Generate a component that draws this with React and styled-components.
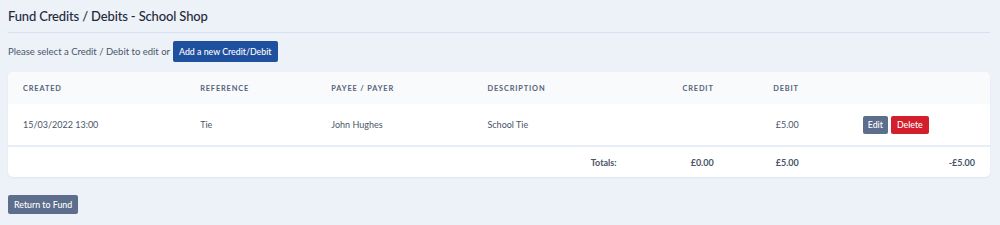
import React from "react";
import styled, { createGlobalStyle } from "styled-components";

const Global = createGlobalStyle`
  html, body { margin: 0; padding: 0; background: #edf1f8; }
  body { font-family: Lato, "Noto Sans", Arial, sans-serif; }
`;

const Page = styled.div`
  padding: 0 10px 0 8px;
  color: #4a5568;
`;

const TitleBar = styled.div`
  height: 32px;
  display: flex;
  align-items: center;
  border-bottom: 1px solid #d6e1f1;
`;

const Title = styled.h1`
  margin: 0;
  font-size: 13px;
  font-weight: 500;
  color: #1f2a3a;
  letter-spacing: -0.15px;
`;

const Prompt = styled.div`
  display: flex;
  align-items: center;
  gap: 3px;
  margin-top: 8px;
  font-size: 9.5px;
  color: #4a5568;
`;

const Button = styled.button`
  font-family: inherit;
  border: none;
  border-radius: 2px;
  color: #fff;
  font-size: ${(p) => p.$fs || 8.8}px;
  font-weight: 500;
  height: ${(p) => p.$h || 19}px;
  padding: 0 ${(p) => p.$px || 6}px;
  background: ${(p) =>
    p.$variant === "primary" ? "#1f4f9f" : p.$variant === "danger" ? "#d31f2b" : "#5d6d8c"};
  cursor: pointer;
`;

const Card = styled.div`
  margin-top: 10px;
  background: #fff;
  border-radius: 5px;
  overflow: hidden;
  box-shadow: 0 1px 2px rgba(30, 50, 90, 0.06);
`;

const Table = styled.table`
  width: 100%;
  border-collapse: collapse;
  table-layout: fixed;
`;

const HeadRow = styled.tr`
  background: #f8fafc;
  height: 32px;
`;

const Th = styled.th`
  padding: 0 15px;
  font-size: 7.4px;
  font-weight: 700;
  letter-spacing: 0.85px;
  text-transform: uppercase;
  color: #56627a;
  text-align: ${(p) => (p.$right ? "right" : "left")};
`;

const BodyRow = styled.tr`
  height: 42px;
  border-bottom: 2px solid #e8eef7;
`;

const Td = styled.td`
  padding: 0 15px;
  font-size: 9px;
  color: #4a5568;
  text-align: ${(p) => (p.$right ? "right" : "left")};
  font-weight: ${(p) => (p.$bold ? 700 : 400)};
`;

const ActionCell = styled.td`
  padding: 0 0 0 49px;
`;

const Actions = styled.div`
  display: flex;
  gap: 3px;
  align-items: center;
`;

const TotalRow = styled.tr`
  height: 31px;
`;

const Footer = styled.div`
  margin-top: 15px;
`;

export default function App() {
  return (
    <>
      <Global />
      <Page>
        <TitleBar>
          <Title>Fund Credits / Debits - School Shop</Title>
        </TitleBar>
        <Prompt>
          <span>Please select a Credit / Debit to edit or</span>
          <Button $variant="primary" $h={21} $px={6}>Add a new Credit/Debit</Button>
        </Prompt>
        <Card>
          <Table>
            <colgroup>
              <col style={{ width: 177 }} />
              <col style={{ width: 131 }} />
              <col style={{ width: 156 }} />
              <col style={{ width: 159 }} />
              <col style={{ width: 97 }} />
              <col style={{ width: 85 }} />
              <col style={{ width: 176 }} />
            </colgroup>
            <thead>
              <HeadRow>
                <Th>Created</Th>
                <Th>Reference</Th>
                <Th>Payee / Payer</Th>
                <Th>Description</Th>
                <Th $right>Credit</Th>
                <Th $right>Debit</Th>
                <Th />
              </HeadRow>
            </thead>
            <tbody>
              <BodyRow>
                <Td>15/03/2022 13:00</Td>
                <Td>Tie</Td>
                <Td>John Hughes</Td>
                <Td>School Tie</Td>
                <Td $right></Td>
                <Td $right>£5.00</Td>
                <ActionCell>
                  <Actions>
                    <Button $h={18} $px={5}>Edit</Button>
                    <Button $variant="danger" $h={18} $px={6}>Delete</Button>
                  </Actions>
                </ActionCell>
              </BodyRow>
              <TotalRow>
                <Td colSpan={3} />
                <Td $right $bold>Totals:</Td>
                <Td $right $bold>£0.00</Td>
                <Td $right $bold>£5.00</Td>
                <Td $right $bold>-£5.00</Td>
              </TotalRow>
            </tbody>
          </Table>
        </Card>
        <Footer>
          <Button $px={6}>Return to Fund</Button>
        </Footer>
      </Page>
    </>
  );
}
